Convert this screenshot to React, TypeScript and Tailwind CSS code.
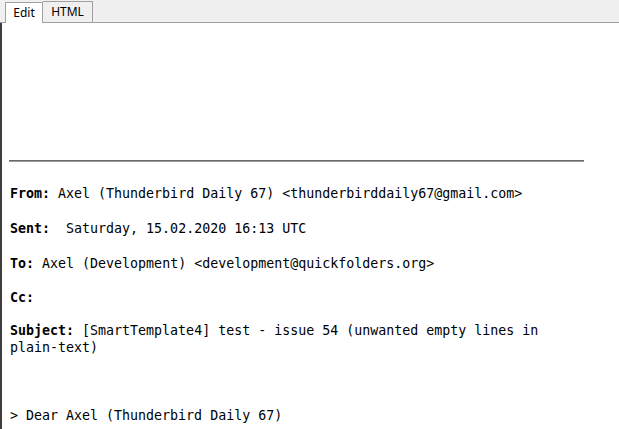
const mono = { fontFamily: '"DejaVu Sans Mono", "Liberation Mono", monospace' };

function Field({ label, gap, children }: { label: string; gap: string; children?: React.ReactNode }) {
  return (
    <div className={gap}>
      <b className="font-bold">{label}</b> {children}
    </div>
  );
}

export default function App() {
  return (
    <div className="w-[619px] h-[429px] overflow-hidden bg-white flex flex-col">
      <div
        className="h-[23px] shrink-0 bg-[#f0f0f0] border-b border-[#a0a0a0] flex items-end pl-[5px] text-[12px] text-black"
        style={{ fontFamily: '"Noto Sans", "Liberation Sans", sans-serif' }}
      >
        <div className="h-[21px] w-[38px] bg-white border border-b-0 border-[#a0a0a0] flex items-center justify-center -mb-px relative z-10">
          Edit
        </div>
        <div className="h-[21px] w-[50px] border border-l-0 border-b-0 border-[#a0a0a0] flex items-center justify-center">
          HTML
        </div>
      </div>
      <div className="flex-1 border-l-2 border-[#3c3c3c] pl-[7px] pt-[137px]">
        <div className="w-[575px] border-t border-b border-t-[#6a6a6a] border-b-[#9a9a9a]" />
        <div className="pt-[23px] text-[13.3px] leading-[17px] text-black w-[575px] pl-px" style={mono}>
          <Field label="From:" gap="mb-[18px]">Axel (Thunderbird Daily 67) &lt;thunderbirddaily67@gmail.com&gt;</Field>
          <Field label="Sent:" gap="mb-[18px]">&nbsp;Saturday, 15.02.2020 16:13 UTC</Field>
          <Field label="To:" gap="mb-[17px]">Axel (Development) &lt;development@quickfolders.org&gt;</Field>
          <Field label="Cc:" gap="mb-[16px]" />
          <div className="mb-[51px]">
            <b className="font-bold">Subject:</b> [SmartTemplate4] test - issue 54 (unwanted empty lines in{' '}
            <span className="whitespace-nowrap">plain-text)</span>
          </div>
          <div>&gt; Dear Axel (Thunderbird Daily 67)</div>
        </div>
      </div>
    </div>
  );
}
